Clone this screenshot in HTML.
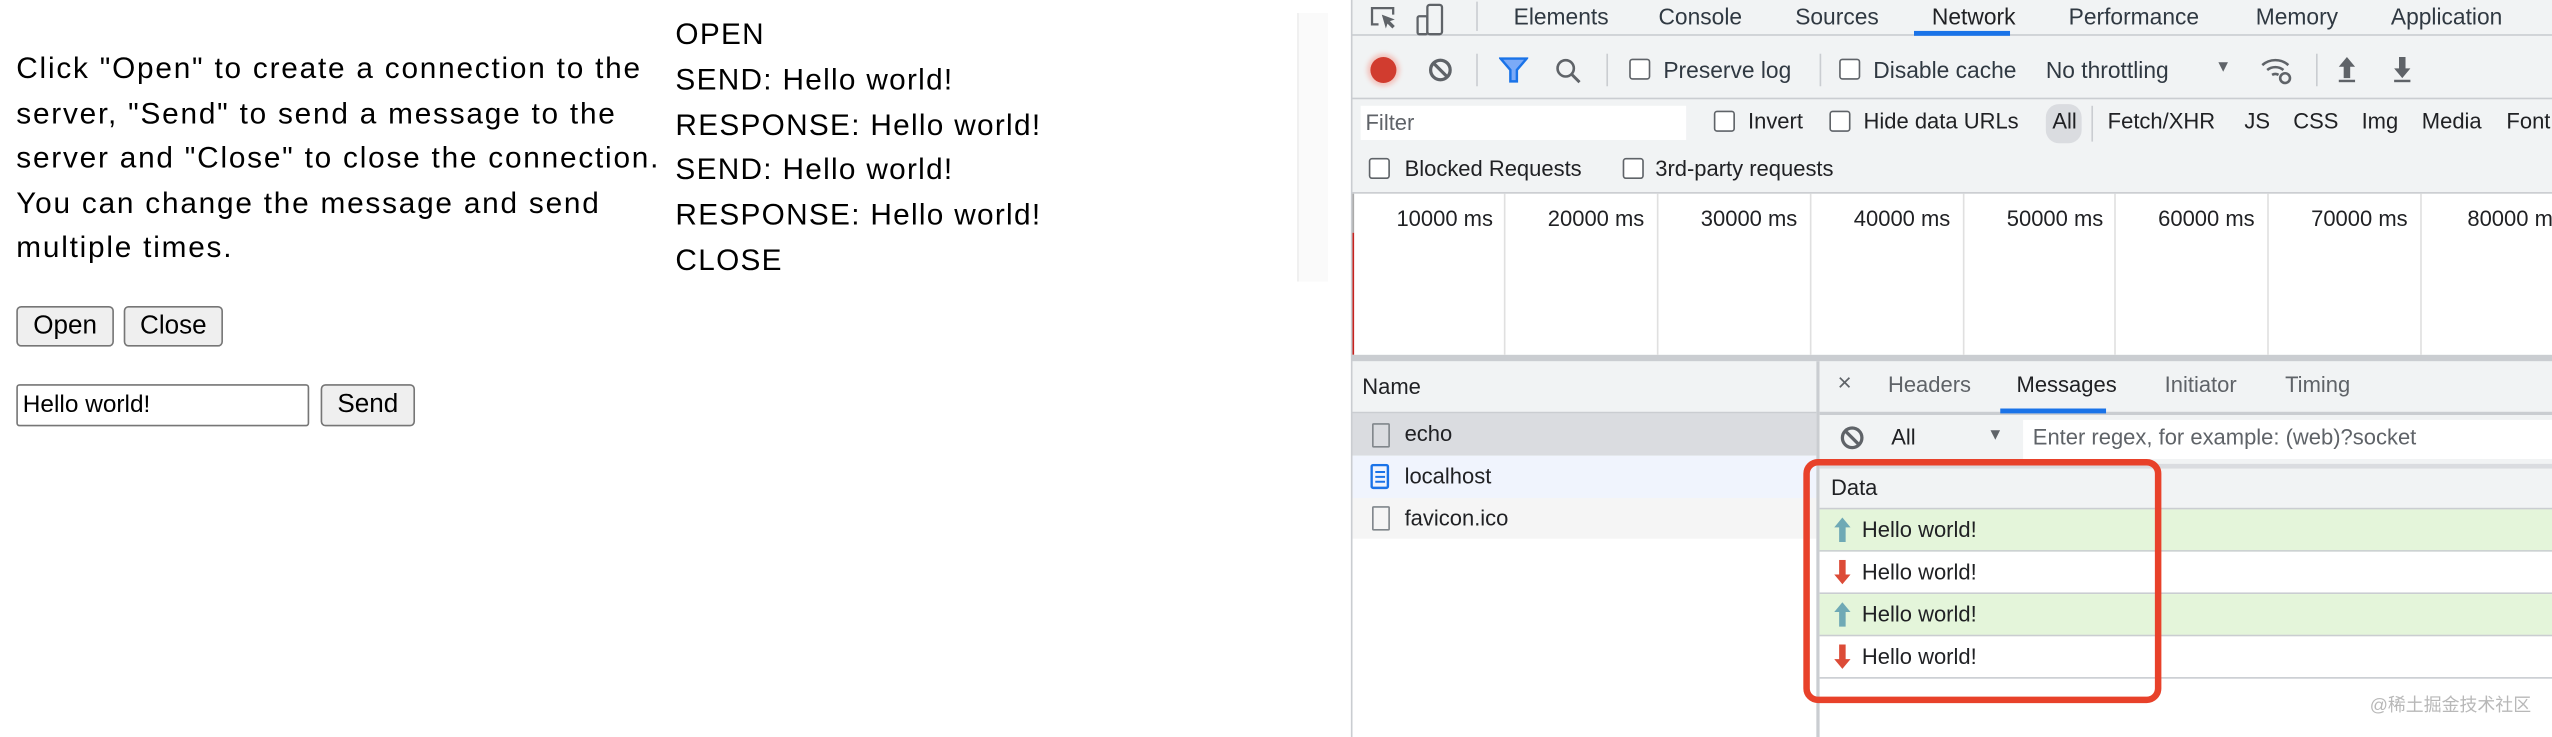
<!DOCTYPE html>
<html><head><meta charset="utf-8"><style>
html,body{margin:0;padding:0;background:#fff;overflow:hidden;width:2552px;height:736px}
#w{position:absolute;left:0;top:0;width:1568px;height:453px;transform:scale(1.62755);transform-origin:0 0;font-family:"Liberation Sans",Arial,sans-serif;color:#000}
.a{position:absolute;white-space:nowrap}
.t{font-size:14px;color:#303942}
.d{font-size:13.5px;color:#202124}
.cb{position:absolute;width:11px;height:11px;border:1px solid #5f6368;border-radius:2px;background:#fff}
.sep{position:absolute;width:1px;background:#cacdd1}
.btn{position:absolute;background:#efefef;border:1px solid #767676;border-radius:3px;font-size:16px;text-align:center;box-sizing:border-box;line-height:24px}
</style></head><body><div id="w">
<div class="a" style="left:10px;top:28px;font-size:18.3px;line-height:27.6px;letter-spacing:1.1px">Click "Open" to create a connection to the<br>server, "Send" to send a message to the<br>server and "Close" to close the connection.<br>You can change the message and send<br>multiple times.</div>
<div class="a" style="left:415px;top:7px;font-size:18.3px;line-height:27.8px;letter-spacing:0.8px">OPEN<br>SEND: Hello world!<br>RESPONSE: Hello world!<br>SEND: Hello world!<br>RESPONSE: Hello world!<br>CLOSE</div>
<div class="btn" style="left:10px;top:188px;width:60px;height:25px">Open</div>
<div class="btn" style="left:76px;top:188px;width:61px;height:25px">Close</div>
<div class="a" style="left:10px;top:236px;width:180px;height:26px;border:1px solid #767676;border-radius:2px;box-sizing:border-box;font-size:15px;line-height:24px;padding-left:3px">Hello world!</div>
<div class="btn" style="left:197px;top:236px;width:58px;height:26px">Send</div>
<div class="a" style="left:797px;top:8px;width:18px;height:165px;background:#fafafa;border-left:1px solid #eee"></div>

<div class="a" style="left:830px;top:0;width:738px;height:453px;background:#fff;border-left:1px solid #cacdd1"></div>
<div class="a" style="left:831px;top:0;width:737px;height:119px;background:#f1f3f4"></div>
<div class="a" style="left:831px;top:21px;width:737px;height:1px;background:#cacdd1"></div>
<div class="a" style="left:831px;top:60px;width:737px;height:1px;background:#cacdd1"></div>
<div class="a" style="left:831px;top:118px;width:737px;height:1px;background:#cacdd1"></div>
<svg class="a" style="left:840px;top:2px" width="60" height="22" viewBox="0 0 60 22"><path d="M7 13H3V3h13v4" fill="none" stroke="#5f6368" stroke-width="1.4"/><path d="M9 7l8 3-3 1 3 3-1.5 1.5-3-3-1 3z" fill="#5f6368"/><rect x="37" y="1" width="9" height="18" rx="1.5" fill="none" stroke="#5f6368" stroke-width="1.4"/><rect x="31" y="8" width="6" height="11" rx="1" fill="none" stroke="#5f6368" stroke-width="1.4"/></svg>
<div class="sep" style="left:907px;top:1px;height:18px"></div>
<div class="a t" style="left:930px;top:2px">Elements</div>
<div class="a t" style="left:1019px;top:2px">Console</div>
<div class="a t" style="left:1103px;top:2px">Sources</div>
<div class="a t" style="left:1187px;top:2px;color:#202124">Network</div>
<div class="a" style="left:1176px;top:19px;width:59px;height:3px;background:#1a73e8"></div>
<div class="a t" style="left:1271px;top:2px">Performance</div>
<div class="a t" style="left:1386px;top:2px">Memory</div>
<div class="a t" style="left:1469px;top:2px">Application</div>
<div class="a" style="left:842px;top:35px;width:16px;height:16px;border-radius:50%;background:#d13c2f;box-shadow:0 0 3px 2px #f2c3bd"></div>
<svg class="a" style="left:877px;top:35px" width="16" height="16"><circle cx="8" cy="8" r="6" fill="none" stroke="#5f6368" stroke-width="2"/><path d="M4 4l8 8" stroke="#5f6368" stroke-width="2"/></svg>
<div class="sep" style="left:907px;top:33px;height:20px"></div>
<svg class="a" style="left:921px;top:35px" width="18" height="16"><path d="M1 1h16l-6 7v7H7V8z" fill="#7baaf7" stroke="#1a73e8" stroke-width="1.5"/></svg>
<svg class="a" style="left:955px;top:35px" width="18" height="18"><circle cx="7" cy="7" r="5" fill="none" stroke="#5f6368" stroke-width="1.6"/><path d="M10.5 10.5l5 5" stroke="#5f6368" stroke-width="1.8"/></svg>
<div class="sep" style="left:987px;top:33px;height:20px"></div>
<div class="cb" style="left:1001px;top:36px"></div><div class="a t" style="left:1022px;top:35px">Preserve log</div>
<div class="sep" style="left:1118px;top:33px;height:20px"></div>
<div class="cb" style="left:1130px;top:36px"></div><div class="a t" style="left:1151px;top:35px">Disable cache</div>
<div class="a t" style="left:1257px;top:35px">No throttling</div>
<div class="a" style="left:1361px;top:36px;font-size:10px;color:#5f6368">▼</div>
<svg class="a" style="left:1388px;top:33px" width="22" height="20"><path d="M2 7a12 12 0 0 1 16 0M5 10a8 8 0 0 1 10 0M8 13a4 4 0 0 1 4 0" fill="none" stroke="#5f6368" stroke-width="1.6"/><circle cx="16" cy="15" r="3" fill="none" stroke="#5f6368" stroke-width="1.6"/></svg>
<div class="sep" style="left:1423px;top:33px;height:20px"></div>
<svg class="a" style="left:1436px;top:34px" width="50" height="18"><path d="M6 1l5 6H8v7H4V7H1z" fill="#5f6368"/><rect x="1" y="15" width="10" height="1.5" fill="#5f6368"/><path d="M40 14l5-6h-3V1h-4v7h-3z" fill="#5f6368"/><rect x="35" y="15" width="10" height="1.5" fill="#5f6368"/></svg>
<div class="a" style="left:836px;top:65px;width:200px;height:21px;background:#fff"></div>
<div class="a t" style="left:839px;top:68px;color:#5f6368;font-size:13.5px">Filter</div>
<div class="cb" style="left:1053px;top:68px"></div><div class="a d" style="left:1074px;top:67px">Invert</div>
<div class="cb" style="left:1124px;top:68px"></div><div class="a d" style="left:1145px;top:67px">Hide data URLs</div>
<div class="a" style="left:1257px;top:64px;width:22px;height:24px;border-radius:8px;background:#dadce0"></div>
<div class="a d" style="left:1261px;top:67px">All</div>
<div class="sep" style="left:1285px;top:65px;height:22px"></div>
<div class="a d" style="left:1295px;top:67px">Fetch/XHR</div>
<div class="a d" style="left:1379px;top:67px">JS</div>
<div class="a d" style="left:1409px;top:67px">CSS</div>
<div class="a d" style="left:1451px;top:67px">Img</div>
<div class="a d" style="left:1488px;top:67px">Media</div>
<div class="a d" style="left:1540px;top:67px">Font</div>
<div class="cb" style="left:841px;top:97px"></div><div class="a d" style="left:863px;top:96px">Blocked Requests</div>
<div class="cb" style="left:997px;top:97px"></div><div class="a d" style="left:1017px;top:96px">3rd-party requests</div>
<div class="a" style="left:831px;top:119px;width:1px;height:24px;background:#aaa"></div>
<div class="a" style="left:831px;top:143px;width:1px;height:75px;background:#c5221f"></div>
<div class="a" style="left:831px;top:218px;width:737px;height:4px;background:#cacdd1"></div>
<div class="a d" style="left:858px;top:127px">10000 ms</div><div class="sep" style="left:924px;top:119px;height:99px;background:#e0e0e0"></div>
<div class="a d" style="left:951px;top:127px">20000 ms</div><div class="sep" style="left:1018px;top:119px;height:99px;background:#e0e0e0"></div>
<div class="a d" style="left:1045px;top:127px">30000 ms</div><div class="sep" style="left:1112px;top:119px;height:99px;background:#e0e0e0"></div>
<div class="a d" style="left:1139px;top:127px">40000 ms</div><div class="sep" style="left:1206px;top:119px;height:99px;background:#e0e0e0"></div>
<div class="a d" style="left:1233px;top:127px">50000 ms</div><div class="sep" style="left:1299px;top:119px;height:99px;background:#e0e0e0"></div>
<div class="a d" style="left:1326px;top:127px">60000 ms</div><div class="sep" style="left:1393px;top:119px;height:99px;background:#e0e0e0"></div>
<div class="a d" style="left:1420px;top:127px">70000 ms</div><div class="sep" style="left:1487px;top:119px;height:99px;background:#e0e0e0"></div>
<div class="a d" style="left:1516px;top:127px">80000 ms</div>
<div class="a" style="left:831px;top:222px;width:285px;height:31px;background:#f1f3f4;border-bottom:1px solid #cacdd1"></div>
<div class="a d" style="left:837px;top:230px">Name</div>
<div class="a" style="left:831px;top:254px;width:285px;height:26px;background:#dadce0"></div>
<div class="a" style="left:831px;top:280px;width:285px;height:26px;background:#f0f4fd"></div>
<div class="a" style="left:831px;top:306px;width:285px;height:25px;background:#f5f5f5"></div>
<div class="a" style="left:843px;top:260px;width:9px;height:13px;border:1px solid #80868b;border-radius:1px"></div>
<div class="a d" style="left:863px;top:259px">echo</div>
<svg class="a" style="left:842px;top:285px" width="12" height="16"><rect x="0.75" y="0.75" width="10" height="14" rx="1" fill="none" stroke="#1a73e8" stroke-width="1.5"/><path d="M3 5h6M3 8h6M3 11h6" stroke="#1a73e8" stroke-width="1.2"/></svg>
<div class="a d" style="left:863px;top:285px">localhost</div>
<div class="a" style="left:843px;top:311px;width:9px;height:13px;border:1px solid #80868b;border-radius:1px"></div>
<div class="a d" style="left:863px;top:311px">favicon.ico</div>
<div class="a" style="left:1116px;top:222px;width:2px;height:231px;background:#cacdd1"></div>
<div class="a" style="left:1118px;top:222px;width:450px;height:31px;background:#f1f3f4;border-bottom:2px solid #cacdd1"></div>
<div class="a" style="left:1129px;top:227px;font-size:15px;color:#5f6368">×</div>
<div class="a d" style="left:1160px;top:229px;color:#5f6368">Headers</div>
<div class="a d" style="left:1239px;top:229px">Messages</div>
<div class="a" style="left:1229px;top:251px;width:65px;height:3px;background:#1a73e8"></div>
<div class="a d" style="left:1330px;top:229px;color:#5f6368">Initiator</div>
<div class="a d" style="left:1404px;top:229px;color:#5f6368">Timing</div>
<div class="a" style="left:1118px;top:255px;width:450px;height:30px;background:#f1f3f4;border-bottom:3px solid #dadce0"></div>
<svg class="a" style="left:1130px;top:261px" width="16" height="16"><circle cx="8" cy="8" r="6" fill="none" stroke="#5f6368" stroke-width="2"/><path d="M4 4l8 8" stroke="#5f6368" stroke-width="2"/></svg>
<div class="a d" style="left:1162px;top:261px">All</div>
<div class="a" style="left:1221px;top:262px;font-size:10px;color:#5f6368">▼</div>
<div class="a" style="left:1243px;top:258px;width:325px;height:24px;background:#fff"></div>
<div class="a d" style="left:1249px;top:261px;color:#5f6368">Enter regex, for example: (web)?socket</div>
<div class="a" style="left:1118px;top:288px;width:450px;height:24px;background:#f1f3f4;border-bottom:1px solid #cacdd1"></div>
<div class="a d" style="left:1125px;top:292px">Data</div>
<div class="a" style="left:1118px;top:313px;width:450px;height:25px;background:#e4f5da;border-bottom:1px solid #cacdd1"></div>
<div class="a" style="left:1118px;top:339px;width:450px;height:25px;background:#fff;border-bottom:1px solid #cacdd1"></div>
<div class="a" style="left:1118px;top:365px;width:450px;height:25px;background:#e4f5da;border-bottom:1px solid #cacdd1"></div>
<div class="a" style="left:1118px;top:391px;width:450px;height:25px;background:#fff;border-bottom:1px solid #cacdd1"></div>
<svg class="a" style="left:1126px;top:318px" width="12" height="16"><path d="M6 0l5 6H8v9H4V6H1z" fill="#6fa9b5"/></svg>
<div class="a d" style="left:1144px;top:318px">Hello world!</div>
<svg class="a" style="left:1126px;top:344px" width="12" height="16"><path d="M6 15l5-6H8V0H4v9H1z" fill="#dc4b37"/></svg>
<div class="a d" style="left:1144px;top:344px">Hello world!</div>
<svg class="a" style="left:1126px;top:370px" width="12" height="16"><path d="M6 0l5 6H8v9H4V6H1z" fill="#6fa9b5"/></svg>
<div class="a d" style="left:1144px;top:370px">Hello world!</div>
<svg class="a" style="left:1126px;top:396px" width="12" height="16"><path d="M6 15l5-6H8V0H4v9H1z" fill="#dc4b37"/></svg>
<div class="a d" style="left:1144px;top:396px">Hello world!</div>
<div class="a" style="left:1108px;top:282px;width:212px;height:142px;border:4.5px solid #e8412a;border-radius:9px"></div>
<div class="a" style="left:1456px;top:425px;font-size:11px;color:#b8b8b8;font-family:'Liberation Sans','Noto Sans CJK SC',sans-serif">@稀土掘金技术社区</div>
</div></body></html>
